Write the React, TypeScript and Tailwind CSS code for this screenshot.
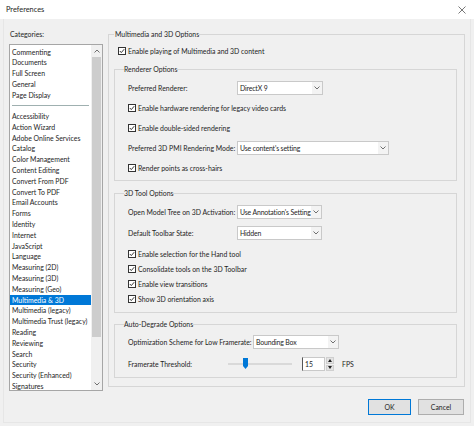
import React from 'react';

const topCats = ['Commenting', 'Documents', 'Full Screen', 'General', 'Page Display'];
const cats = [
  'Accessibility', 'Action Wizard', 'Adobe Online Services', 'Catalog', 'Color Management',
  'Content Editing', 'Convert From PDF', 'Convert To PDF', 'Email Accounts', 'Forms', 'Identity',
  'Internet', 'JavaScript', 'Language', 'Measuring (2D)', 'Measuring (3D)', 'Measuring (Geo)',
  'Multimedia & 3D', 'Multimedia (legacy)', 'Multimedia Trust (legacy)', 'Reading', 'Reviewing',
  'Search', 'Security', 'Security (Enhanced)', 'Signatures',
];

const Chevron: React.FC<{ up?: boolean }> = ({ up }) => (
  <svg width="6" height="4" viewBox="0 0 6 4" className="block">
    <polyline points={up ? '0.5,3.5 3,1 5.5,3.5' : '0.5,0.5 3,3 5.5,0.5'} fill="none" stroke="#606060" strokeWidth="0.9" />
  </svg>
);

const Check: React.FC<{ label: string }> = ({ label }) => (
  <div className="flex items-center h-[14px] gap-[2px] whitespace-nowrap">
    <div className="w-[8px] h-[8px] border border-[#333] bg-white flex items-center justify-center shrink-0">
      <svg width="6" height="6" viewBox="0 0 6 6">
        <polyline points="0.8,3 2.3,4.6 5.2,1.2" fill="none" stroke="#222" strokeWidth="0.9" />
      </svg>
    </div>
    <span>{label}</span>
  </div>
);

const Select: React.FC<{ text: string; w: string }> = ({ text, w }) => (
  <div className={`${w} h-[14px] flex border border-[#c9c9c9] bg-white shrink-0`}>
    <span className="flex-1 pl-[2px] leading-[12px] overflow-hidden whitespace-nowrap tracking-[-0.15px]">{text}</span>
    <div className="w-[10px] bg-[#f3f3f3] flex items-center justify-center">
      <Chevron />
    </div>
  </div>
);

export default function App() {
  return (
    <div className="w-[474px] h-[426px] bg-[#f0f0f0] flex flex-col font-['Lato',sans-serif] text-[6.9px] text-[#1e1e1e] overflow-hidden">
      <div className="h-[19px] bg-white flex items-center justify-between pl-[6px] pr-[8px] shrink-0">
        <span className="text-[7.4px]">Preferences</span>
        <svg width="8" height="8" viewBox="0 0 8 8">
          <path d="M0.5 0.5 L7.5 7.5 M7.5 0.5 L0.5 7.5" stroke="#555" strokeWidth="0.8" />
        </svg>
      </div>

      <div className="flex-1 flex flex-col pl-[5px] pr-[5px] pt-[10px] ml-[3px] mr-[3px] mb-[3px] border-x border-b border-[#e6e6e6]">
        <div className="flex gap-[5px]">
          {/* categories */}
          <div className="w-[94px] flex flex-col">
            <div className="h-[10px] leading-[10px] pl-[1px]">Categories:</div>
            <div className="mt-[5px] h-[347px] border border-[#a6a6a6] bg-white flex overflow-hidden">
              <div className="flex-1 pt-[1.5px]">
                {topCats.map(c => (
                  <div key={c} className="h-[10.8px] leading-[10.8px] pl-[2px] whitespace-nowrap">{c}</div>
                ))}
                <div className="h-[10.6px] flex items-center px-[2px]">
                  <div className="h-px flex-1 bg-[#9fb0b0]" />
                </div>
                {cats.map(c => (
                  <div
                    key={c}
                    className={`h-[10.8px] leading-[10.8px] pl-[2px] whitespace-nowrap ${c === 'Multimedia & 3D' ? 'bg-[#0078d7] text-white' : ''}`}
                  >
                    {c}
                  </div>
                ))}
              </div>
              <div className="w-[11px] bg-[#f0f0f0] flex flex-col">
                <div className="h-[12px] flex items-center justify-center"><Chevron up /></div>
                <div className="flex-1">
                  <div className="h-[280px] mx-[1px] bg-[#cdcdcd]" />
                </div>
                <div className="h-[12px] flex items-center justify-center"><Chevron /></div>
              </div>
            </div>
          </div>

          {/* options */}
          <fieldset className="w-[357px] h-[358px] border border-[#d6d6d6] pl-[5px] pr-[7px]">
            <legend className="h-[10px] leading-[10px] pl-[1px]">Multimedia and 3D Options</legend>
            <div className="mt-[5px] ml-[4px]">
              <Check label="Enable playing of Multimedia and 3D content" />
            </div>

            <fieldset className="mt-[6px] border border-[#d6d6d6] px-[9px] pb-[5px]">
              <legend className="h-[10px] leading-[10px]">Renderer Options</legend>
              <div className="pl-[4px] pt-[7px] flex flex-col gap-[6px]">
                <div className="flex items-center h-[14px] whitespace-nowrap">
                  <span className="w-[109px]">Preferred Renderer:</span>
                  <Select text="DirectX 9" w="w-[86px]" />
                </div>
                <Check label="Enable hardware rendering for legacy video cards" />
                <Check label="Enable double-sided rendering" />
                <div className="flex items-center h-[14px] whitespace-nowrap">
                  <span className="w-[109px]">Preferred 3D PMI Rendering Mode:</span>
                  <Select text="Use content's setting" w="w-[152px]" />
                </div>
                <Check label="Render points as cross-hairs" />
              </div>
            </fieldset>

            <fieldset className="mt-[7px] border border-[#d6d6d6] px-[9px] pb-[6px]">
              <legend className="h-[10px] leading-[10px]">3D Tool Options</legend>
              <div className="pl-[4px] pt-[7px] flex flex-col">
                <div className="flex items-center h-[14px] whitespace-nowrap">
                  <span className="w-[109px]">Open Model Tree on 3D Activation:</span>
                  <Select text="Use Annotation's Setting" w="w-[85px]" />
                </div>
                <div className="flex items-center h-[14px] mt-[7px] whitespace-nowrap">
                  <span className="w-[109px]">Default Toolbar State:</span>
                  <Select text="Hidden" w="w-[85px]" />
                </div>
                <div className="mt-[7px] flex flex-col gap-px">
                  <Check label="Enable selection for the Hand tool" />
                  <Check label="Consolidate tools on the 3D Toolbar" />
                  <Check label="Enable view transitions" />
                  <Check label="Show 3D orientation axis" />
                </div>
              </div>
            </fieldset>

            <fieldset className="mt-[6px] border border-[#d6d6d6] px-[9px] pb-[6px]">
              <legend className="h-[10px] leading-[10px]">Auto-Degrade Options</legend>
              <div className="pl-[4px] pt-[6px] flex flex-col gap-[8px]">
                <div className="flex items-center h-[14px] whitespace-nowrap">
                  <span className="w-[125px]">Optimization Scheme for Low Framerate:</span>
                  <Select text="Bounding Box" w="w-[86px]" />
                </div>
                <div className="flex items-center h-[14px] whitespace-nowrap">
                  <span className="w-[100px]">Framerate Threshold:</span>
                  <div className="relative w-[64px] h-[14px] flex items-center">
                    <div className="h-[2px] w-full bg-[#d9d9d9]" />
                    <svg className="absolute left-[15px] top-[1px]" width="5" height="11" viewBox="0 0 5 11">
                      <path d="M0 0 H5 V8 L2.5 11 L0 8 Z" fill="#0078d7" />
                    </svg>
                  </div>
                  <div className="ml-[10px] w-[23px] h-[14px] bg-white border border-[#c9c9c9] border-l-[#555] pl-[2px] leading-[12px]">15</div>
                  <div className="ml-px w-[8px] h-[14px] flex flex-col gap-px">
                    <div className="flex-1 bg-[#e3e3e3] border border-[#cfcfcf] flex items-center justify-center">
                      <svg width="4" height="3" viewBox="0 0 4 3"><path d="M0 3 L2 0 L4 3 Z" fill="#222" /></svg>
                    </div>
                    <div className="flex-1 bg-[#e3e3e3] border border-[#cfcfcf] flex items-center justify-center">
                      <svg width="4" height="3" viewBox="0 0 4 3"><path d="M0 0 L4 0 L2 3 Z" fill="#222" /></svg>
                    </div>
                  </div>
                  <span className="ml-[8px]">FPS</span>
                </div>
              </div>
            </fieldset>
          </fieldset>
        </div>

        <div className="flex justify-end gap-[7px] mt-[8px] pr-[1px]">
          <button className="w-[43px] h-[16px] border border-[#0078d7] bg-[#e1e1e1] text-[6.9px]">OK</button>
          <button className="w-[46px] h-[16px] border border-[#adadad] bg-[#e1e1e1] text-[6.9px]">Cancel</button>
        </div>
      </div>
    </div>
  );
}
